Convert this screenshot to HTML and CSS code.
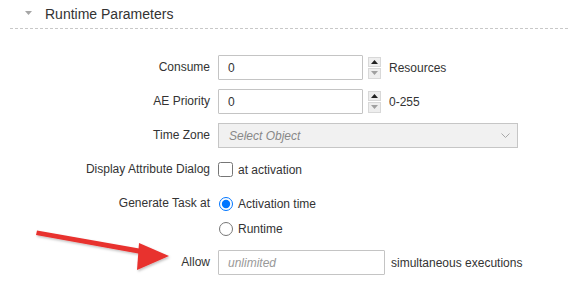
FILE: index.html
```html
<!DOCTYPE html>
<html lang="en">
<head>
  <meta charset="UTF-8" />
  <title>Runtime Parameters</title>
  <link rel="stylesheet" href="styles.css">
</head>
<body>
  <div class="panel">
    <!-- Section header -->
    <div class="section-head">
      <svg class="caret" width="7" height="4" viewBox="0 0 7 4"><polygon points="0,0 7,0 3.5,4" fill="#a6a6a6"/></svg>
      <span class="section-title">Runtime Parameters</span>
    </div>

    <!-- Form -->
    <div class="form">
      <label class="label">Consume</label>
      <div class="field">
        <input class="text-input num" type="text" value="0">
        <div class="spinner">
          <span class="spin up"><svg width="7" height="4" viewBox="0 0 7 4"><polygon points="0,4 7,4 3.5,0" fill="#222"/></svg></span>
          <span class="spin down"><svg width="7" height="4" viewBox="0 0 7 4"><polygon points="0,0 7,0 3.5,4" fill="#a0a0a0"/></svg></span>
        </div>
        <span class="after">Resources</span>
      </div>

      <label class="label">AE Priority</label>
      <div class="field">
        <input class="text-input num" type="text" value="0">
        <div class="spinner">
          <span class="spin up"><svg width="7" height="4" viewBox="0 0 7 4"><polygon points="0,4 7,4 3.5,0" fill="#222"/></svg></span>
          <span class="spin down"><svg width="7" height="4" viewBox="0 0 7 4"><polygon points="0,0 7,0 3.5,4" fill="#a0a0a0"/></svg></span>
        </div>
        <span class="after">0-255</span>
      </div>

      <label class="label">Time Zone</label>
      <div class="field">
        <div class="select">
          <span class="placeholder">Select Object</span>
          <svg width="9" height="5" viewBox="0 0 9 5"><polyline points="0.5,0.5 4.5,4.5 8.5,0.5" fill="none" stroke="#a8a8a8" stroke-width="1"/></svg>
        </div>
      </div>

      <label class="label">Display Attribute Dialog</label>
      <div class="field">
        <input class="check" type="checkbox">
        <span class="after-check">at activation</span>
      </div>

      <label class="label top">Generate Task at</label>
      <div class="radios">
        <div class="radio-line">
          <input class="radio" type="radio" name="gen" checked>
          <span class="after-check">Activation time</span>
        </div>
        <div class="radio-line">
          <input class="radio" type="radio" name="gen">
          <span class="after-check">Runtime</span>
        </div>
      </div>

      <label class="label">Allow</label>
      <div class="field">
        <input class="text-input allow" type="text" placeholder="unlimited">
        <span class="after wide">simultaneous executions</span>
      </div>
    </div>
  </div>

  <!-- Annotation arrow -->
  <svg class="annot" width="568" height="300" viewBox="0 0 568 300">
    <defs>
      <filter id="sh" x="-10%" y="-30%" width="120%" height="160%">
        <feDropShadow dx="1" dy="1.5" stdDeviation="1.2" flood-color="#000" flood-opacity="0.25"/>
      </filter>
    </defs>
    <g filter="url(#sh)" fill="#e8302e">
      <polygon points="37,230.5 36,235 141,254 142,249"/>
      <polygon points="169,256 139,243 137,270"/>
    </g>
  </svg>
</body>
</html>
```

FILE: styles.css
```css
* {
  margin: 0;
  padding: 0;
  box-sizing: border-box;
}

body {
  background: #fff;
  color: #333;
  font-family: "Liberation Sans", Arial, sans-serif;
  font-size: 12px;
  width: 568px;
  height: 300px;
  overflow: hidden;
  position: relative;
}

/* Header */
.section-head {
  margin-left: 10px;
  height: 29px;
  padding-left: 15px;
  display: flex;
  align-items: center;
  gap: 13px;
  border-bottom: 1px dashed #c8c8c8;
}

.caret {
  margin-top: -2px;
}

.section-title {
  font-size: 14px;
  color: #333;
}

/* Form grid */
.form {
  margin-top: 26px;
  display: grid;
  grid-template-columns: 210px auto;
  column-gap: 8px;
  row-gap: 9px;
  align-items: center;
}

.label {
  text-align: right;
  line-height: 25px;
}

.label.top {
  align-self: start;
}

.field {
  display: flex;
  align-items: center;
  height: 25px;
}

.text-input {
  height: 25px;
  border: 1px solid #c4c4c4;
  border-radius: 1px;
  font-family: inherit;
  font-size: 12px;
  color: #333;
  padding: 0 9px;
  outline: none;
}

.text-input::placeholder {
  color: #999;
  font-style: italic;
}

.num {
  width: 145px;
}

.allow {
  width: 167px;
}

.spinner {
  margin-left: 5px;
  width: 13px;
  height: 22px;
  display: flex;
  flex-direction: column;
  gap: 1px;
}

.spin {
  flex: 1;
  background: #eee;
  border: 1px solid #d8d8d8;
  display: flex;
  align-items: center;
  justify-content: center;
}

.after {
  margin-left: 8px;
}

.after.wide {
  margin-left: 6px;
}

.select {
  width: 300px;
  height: 25px;
  background: #f1f1f1;
  border: 1px solid #c6c6c6;
  display: flex;
  align-items: center;
  justify-content: space-between;
  padding: 0 7px 0 10px;
}

.placeholder {
  color: #888;
  font-style: italic;
}

.check {
  width: 15px;
  height: 15px;
  margin: 0;
}

.after-check {
  margin-left: 5px;
}

.radios {
  display: flex;
  flex-direction: column;
}

.radio-line {
  height: 25px;
  display: flex;
  align-items: center;
}

.radio {
  width: 14px;
  height: 14px;
  margin: 0 0 0 1px;
}

.annot {
  position: absolute;
  left: 0;
  top: 0;
  pointer-events: none;
}
```
